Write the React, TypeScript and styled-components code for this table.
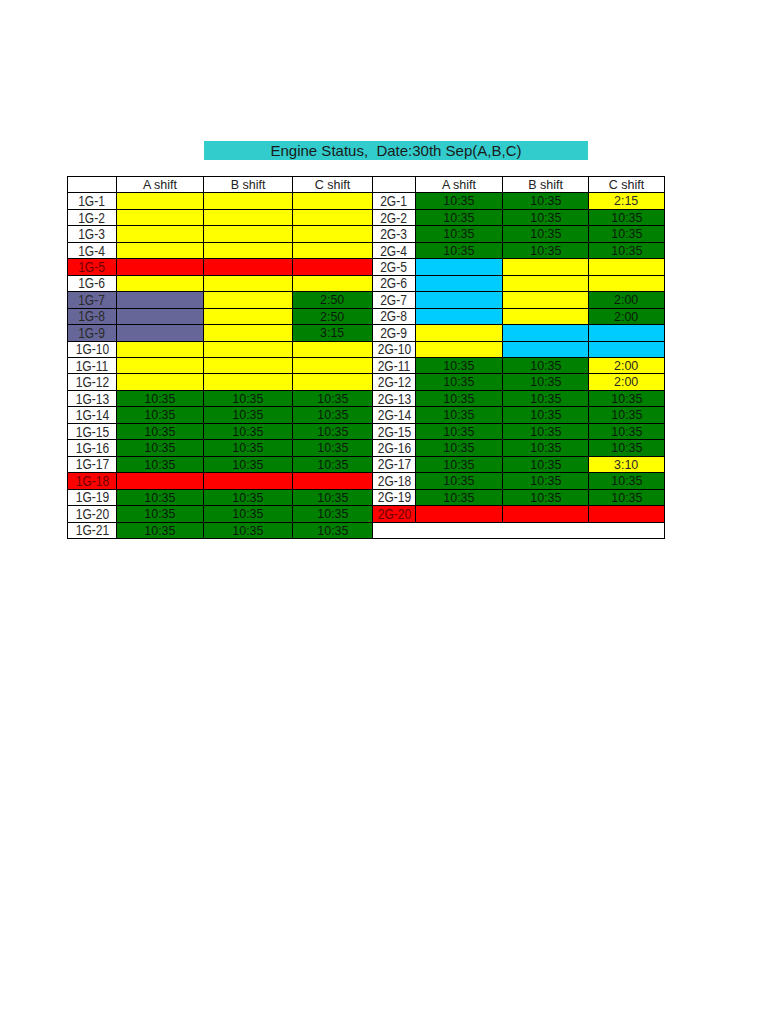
import React from "react";
import styled, { createGlobalStyle } from "styled-components";

const GlobalStyle = createGlobalStyle`
  html, body { margin: 0; padding: 0; background: #ffffff; }
  body { font-family: "Liberation Sans", Arial, sans-serif; }
`;

type Fill = "Y" | "R" | "G" | "B" | "P" | "W";

const COLORS: Record<Fill, string> = {
  Y: "#ffff00",
  R: "#ff0000",
  G: "#008000",
  B: "#00ccff",
  P: "#666699",
  W: "#ffffff",
};

const Page = styled.div`
  display: flex;
  flex-direction: column;
  align-items: flex-start;
  padding: 141px 0 0 67px;
  gap: 16px;
`;

const Title = styled.div`
  margin-left: 137px;
  width: 384px;
  height: 19px;
  background: #33cccc;
  color: #1a1a1a;
  font-size: 15px;
  line-height: 19px;
  text-align: center;
  white-space: pre;
`;

const Grid = styled.div`
  display: grid;
  grid-template-columns: 48px 86px 88px 79px 42px 86px 85px 75px;
  grid-template-rows: repeat(22, 1fr);
  height: 363px;
  box-sizing: border-box;
  gap: 1px;
  padding: 1px;
  background: #000000;
`;

const Cell = styled.div<{ $fill: Fill; $span?: number }>`
  background: ${(p) => COLORS[p.$fill]};
  grid-column: ${(p) => (p.$span ? `span ${p.$span}` : "auto")};
  display: flex;
  align-items: center;
  justify-content: center;
  overflow: hidden;
  font-size: 12.5px;
  line-height: 1;
  color: ${(p) => (p.$fill === "G" ? "#0a1a0a" : p.$fill === "R" ? "#6e0000" : "#2a2a2a")};
`;

const Head = styled(Cell)`
  color: #222222;
  padding-top: 1px;
`;

const LabelText = styled.span`
  display: inline-block;
  font-size: 14px;
  transform: scaleX(0.86);
  white-space: nowrap;
`;

const Value = styled.span`
  display: inline-block;
  font-size: 13.5px;
  transform: scaleX(0.92);
  white-space: nowrap;
`;

type CellDef = [Fill, string?];
type Row = { label: string; labelFill: Fill; cells: CellDef[] };

const g = (v = "10:35"): CellDef => ["G", v];
const Y: CellDef = ["Y"];
const R: CellDef = ["R"];
const B: CellDef = ["B"];
const P: CellDef = ["P"];

const left: Row[] = [
  { label: "1G-1", labelFill: "W", cells: [Y, Y, Y] },
  { label: "1G-2", labelFill: "W", cells: [Y, Y, Y] },
  { label: "1G-3", labelFill: "W", cells: [Y, Y, Y] },
  { label: "1G-4", labelFill: "W", cells: [Y, Y, Y] },
  { label: "1G-5", labelFill: "R", cells: [R, R, R] },
  { label: "1G-6", labelFill: "W", cells: [Y, Y, Y] },
  { label: "1G-7", labelFill: "P", cells: [P, Y, g("2:50")] },
  { label: "1G-8", labelFill: "P", cells: [P, Y, g("2:50")] },
  { label: "1G-9", labelFill: "P", cells: [P, Y, g("3:15")] },
  { label: "1G-10", labelFill: "W", cells: [Y, Y, Y] },
  { label: "1G-11", labelFill: "W", cells: [Y, Y, Y] },
  { label: "1G-12", labelFill: "W", cells: [Y, Y, Y] },
  { label: "1G-13", labelFill: "W", cells: [g(), g(), g()] },
  { label: "1G-14", labelFill: "W", cells: [g(), g(), g()] },
  { label: "1G-15", labelFill: "W", cells: [g(), g(), g()] },
  { label: "1G-16", labelFill: "W", cells: [g(), g(), g()] },
  { label: "1G-17", labelFill: "W", cells: [g(), g(), g()] },
  { label: "1G-18", labelFill: "R", cells: [R, R, R] },
  { label: "1G-19", labelFill: "W", cells: [g(), g(), g()] },
  { label: "1G-20", labelFill: "W", cells: [g(), g(), g()] },
  { label: "1G-21", labelFill: "W", cells: [g(), g(), g()] },
];

const right: (Row | null)[] = [
  { label: "2G-1", labelFill: "W", cells: [g(), g(), ["Y", "2:15"]] },
  { label: "2G-2", labelFill: "W", cells: [g(), g(), g()] },
  { label: "2G-3", labelFill: "W", cells: [g(), g(), g()] },
  { label: "2G-4", labelFill: "W", cells: [g(), g(), g()] },
  { label: "2G-5", labelFill: "W", cells: [B, Y, Y] },
  { label: "2G-6", labelFill: "W", cells: [B, Y, Y] },
  { label: "2G-7", labelFill: "W", cells: [B, Y, g("2:00")] },
  { label: "2G-8", labelFill: "W", cells: [B, Y, g("2:00")] },
  { label: "2G-9", labelFill: "W", cells: [Y, B, B] },
  { label: "2G-10", labelFill: "W", cells: [Y, B, B] },
  { label: "2G-11", labelFill: "W", cells: [g(), g(), ["Y", "2:00"]] },
  { label: "2G-12", labelFill: "W", cells: [g(), g(), ["Y", "2:00"]] },
  { label: "2G-13", labelFill: "W", cells: [g(), g(), g()] },
  { label: "2G-14", labelFill: "W", cells: [g(), g(), g()] },
  { label: "2G-15", labelFill: "W", cells: [g(), g(), g()] },
  { label: "2G-16", labelFill: "W", cells: [g(), g(), g()] },
  { label: "2G-17", labelFill: "W", cells: [g(), g(), ["Y", "3:10"]] },
  { label: "2G-18", labelFill: "W", cells: [g(), g(), g()] },
  { label: "2G-19", labelFill: "W", cells: [g(), g(), g()] },
  { label: "2G-20", labelFill: "R", cells: [R, R, R] },
  null,
];

const renderRow = (row: Row, key: string) => (
  <React.Fragment key={key}>
    <Cell $fill={row.labelFill}>
      <LabelText>{row.label}</LabelText>
    </Cell>
    {row.cells.map(([fill, v], i) => (
      <Cell key={i} $fill={fill}>
        {v ? <Value>{v}</Value> : null}
      </Cell>
    ))}
  </React.Fragment>
);

const headers = ["", "A shift", "B shift", "C shift"];

export default function App() {
  return (
    <>
      <GlobalStyle />
      <Page>
        <Title>{"Engine Status,  Date:30th Sep(A,B,C)"}</Title>
        <Grid>
          {[...headers, ...headers].map((h, i) => (
            <Head key={`h${i}`} $fill="W">
              {h}
            </Head>
          ))}
          {left.map((row, i) => {
            const r = right[i];
            return (
              <React.Fragment key={`r${i}`}>
                {renderRow(row, `l${i}`)}
                {r ? renderRow(r, `rr${i}`) : <Cell $fill="W" $span={4} />}
              </React.Fragment>
            );
          })}
        </Grid>
      </Page>
    </>
  );
}
